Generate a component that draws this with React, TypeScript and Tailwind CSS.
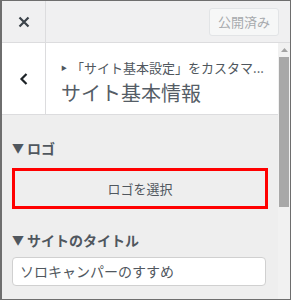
export default function App() {
  const font = { fontFamily: '"Noto Sans CJK JP", "Noto Sans", sans-serif' }

  return (
    <div
      className="w-[291px] h-[300px] overflow-hidden border border-[#6e6e6e] border-l-2 bg-[#eeeeee] flex flex-col"
      style={font}
    >
      {/* Top bar */}
      <div className="h-[42px] shrink-0 flex border-b border-[#dcdcde] bg-[#f0f0f1]">
        <div className="w-[44px] flex items-center justify-center border-r border-[#dcdcde]">
          <svg width="12" height="12" viewBox="0 0 12 12">
            <path d="M1.5 1.5 L10.5 10.5 M10.5 1.5 L1.5 10.5" stroke="#3c434a" strokeWidth="2.2" />
          </svg>
        </div>
        <div className="flex-1 flex items-center justify-end pr-[11px]">
          <div className="w-[70px] h-[28px] rounded-[3px] border border-[#e2e4e6] bg-[#f6f7f7] flex items-center justify-center text-[13px] text-[#a7aaad]">
            公開済み
          </div>
        </div>
      </div>

      {/* Body with scrollbar */}
      <div className="flex-1 flex min-h-0">
        <div className="flex-1 flex flex-col min-w-0">
          {/* Section header */}
          <div className="h-[72px] shrink-0 flex bg-white border-b border-[#dcdcde]">
            <div className="w-[44px] flex items-center justify-center border-r border-[#dcdcde]">
              <svg width="10" height="14" viewBox="0 0 10 14">
                <path d="M7.5 2 L2.5 7 L7.5 12" stroke="#1d2327" strokeWidth="2.2" fill="none" />
              </svg>
            </div>
            <div className="flex-1 pl-[15px] pt-[15px] min-w-0">
              <div className="flex items-center text-[13px] leading-[20px] text-[#50575e] whitespace-nowrap">
                <span className="text-[6px] mr-[4px] text-[#50575e]">▶</span>
                「サイト基本設定」をカスタマ...
              </div>
              <div className="text-[20px] leading-[30px] text-[#555d66] whitespace-nowrap">
                サイト基本情報
              </div>
            </div>
          </div>

          {/* Controls */}
          <div className="flex-1 pl-[10px] pr-[10px] pt-[22px]">
            <div className="flex items-center text-[14px] font-bold text-[#50575e] leading-[22px]">
              <span className="text-[12px] mr-[3px]">▼</span>ロゴ
            </div>
            <div className="mt-[9px] h-[41px] border-[3px] border-[#ff0000] flex items-center justify-center text-[13px] text-[#50575e]">
              ロゴを選択
            </div>
            <div className="mt-[20px] flex items-center text-[14px] font-bold text-[#50575e] leading-[22px]">
              <span className="text-[12px] mr-[3px]">▼</span>サイトのタイトル
            </div>
            <div className="mt-[6px] mr-[2px] h-[29px] rounded-[4px] border border-[#d0d0d0] bg-white flex items-center px-[7px] text-[14px] text-[#50575e]">
              ソロキャンパーのすすめ
            </div>
          </div>
        </div>

        {/* Scrollbar */}
        <div className="w-[12px] shrink-0 flex flex-col bg-[#f1f1f1]">
          <div className="h-[14px] flex items-center justify-center">
            <svg width="7" height="4" viewBox="0 0 7 4">
              <path d="M0 4 L3.5 0 L7 4 Z" fill="#a3a3a3" />
            </svg>
          </div>
          <div className="h-[150px] mx-[1px] bg-[#a8a8a8]" />
        </div>
      </div>
    </div>
  )
}
